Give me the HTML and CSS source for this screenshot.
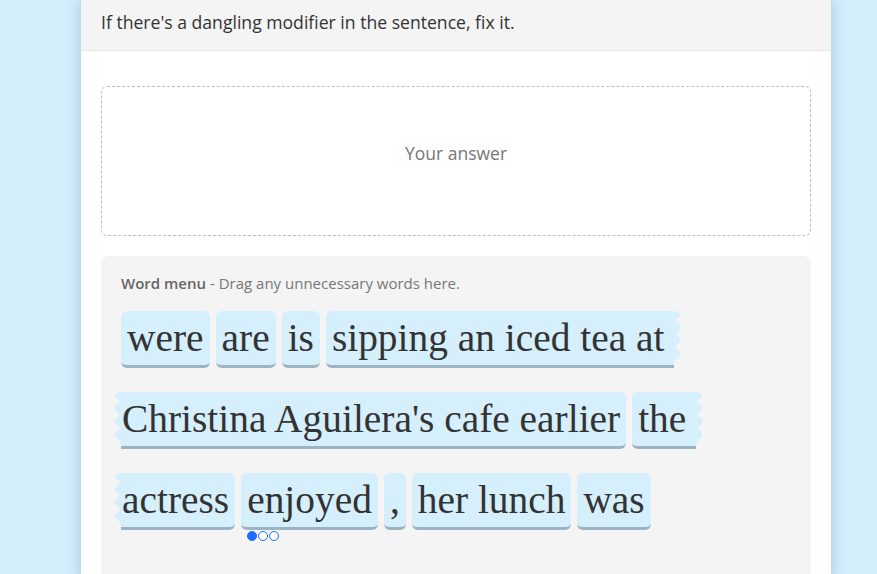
FILE: index.html
```html
<!DOCTYPE html>
<html>
<head>
<meta charset="utf-8">
<link rel="stylesheet" href="styles.css">
</head>
<body>
<div class="card">
  <div class="prompt">If there's a dangling modifier in the sentence, fix it.</div>
  <div class="content">
    <div class="answer">Your answer</div>
    <div class="menu">
      <div class="menu-label"><span class="menu-title">Word menu</span> - Drag any unnecessary words here.</div>
      <div class="row">
        <span class="chip">were</span>
        <span class="chip">are</span>
        <span class="chip">is</span>
        <span class="chip cont-right">sipping an iced tea at</span>
      </div>
      <div class="row">
        <span class="chip cont-left">Christina Aguilera's cafe earlier</span>
        <span class="chip cont-right">the</span>
      </div>
      <div class="row">
        <span class="chip cont-left">actress</span>
        <span class="chip has-dots">enjoyed<span class="dots"><span class="dot filled"></span><span class="dot"></span><span class="dot"></span></span></span>
        <span class="chip">,</span>
        <span class="chip">her lunch</span>
        <span class="chip">was</span>
      </div>
    </div>
  </div>
</div>
</body>
</html>
```
FILE: styles.css
```css
html, body {
  margin: 0;
  padding: 0;
}
body {
  background: #d4eefc;
  font-family: "Open Sans", "Noto Sans", sans-serif;
  height: 574px;
  overflow: hidden;
}
.card {
  margin-left: 81px;
  width: 750px;
  background: #ffffff;
  box-shadow: 0 0 14px rgba(60, 120, 165, 0.35);
  min-height: 574px;
}
.prompt {
  background: #f4f4f4;
  color: #333333;
  font-size: 17.6px;
  line-height: 24px;
  padding: 10px 20px 16px 20px;
  border-bottom: 1px solid #e6e6e6;
}
.content {
  padding: 35px 20px 0 20px;
}
.answer {
  box-sizing: border-box;
  height: 150px;
  border: 1px dashed #bdbdbd;
  border-radius: 6px;
  padding-top: 54px;
  text-align: center;
  color: #777777;
  font-size: 17.5px;
  line-height: 24px;
}
.menu {
  margin-top: 20px;
  background: #f4f4f4;
  border-radius: 8px;
  padding: 18px 20px 50px 20px;
}
.menu-label {
  font-size: 15px;
  line-height: 18px;
  color: #777777;
}
.menu-title {
  color: #666666;
  font-weight: 600;
}
.row {
  display: flex;
  gap: 6px;
  margin-top: 19px;
}
.row + .row {
  margin-top: 24px;
}
.chip {
  position: relative;
  box-sizing: border-box;
  height: 57px;
  line-height: 54px;
  padding: 0 6px;
  background: #d5effd;
  border-bottom: 3px solid #9cb4c2;
  border-radius: 6px;
  font-family: "Liberation Serif", serif;
  font-size: 39.4px;
  color: #333333;
  white-space: nowrap;
}
.cont-right {
  border-top-right-radius: 0;
  border-bottom-right-radius: 0;
  padding-right: 10px;
}
.cont-left {
  border-top-left-radius: 0;
  border-bottom-left-radius: 0;
  padding-left: 1px;
}
.cont-right::after,
.cont-left::before {
  content: "";
  position: absolute;
  top: 0;
  bottom: 0;
  width: 7px;
  background: #d5effd;
}
.cont-right::after {
  left: 100%;
  clip-path: polygon(0 0, 100% 5%, 15% 17%, 100% 29%, 15% 42%, 100% 54%, 15% 67%, 100% 79%, 15% 91%, 0 100%);
}
.cont-left::before {
  right: 100%;
  clip-path: polygon(100% 0, 0 5%, 85% 17%, 0 29%, 85% 42%, 0 54%, 85% 67%, 0 79%, 85% 91%, 100% 100%);
}
.dots {
  position: absolute;
  left: 6px;
  top: 100%;
  margin-top: 4px;
  display: flex;
  gap: 1px;
}
.dot {
  box-sizing: border-box;
  width: 10px;
  height: 10px;
  border-radius: 50%;
  border: 1.5px solid #1a6dff;
  background: #ffffff;
}
.dot.filled {
  background: #1a6dff;
}
```
